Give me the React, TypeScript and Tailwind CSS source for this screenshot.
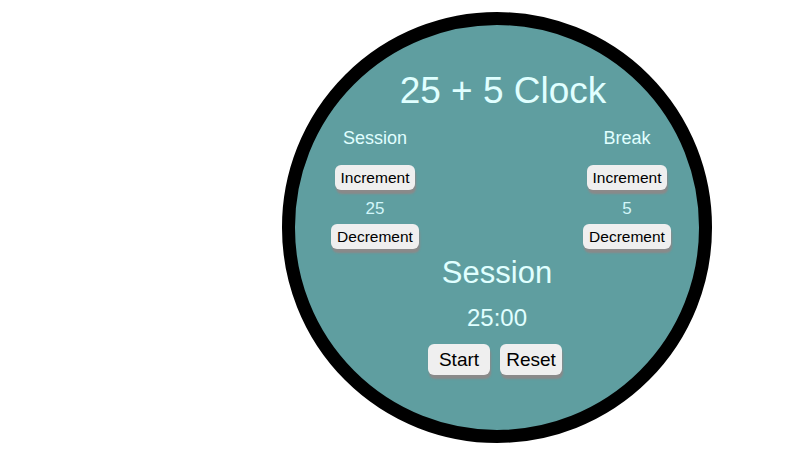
import React, { useState } from "react";

const btn =
  "rounded-[6px] bg-[#efefef] text-black shadow-[1px_4px_2px_#8a8a8a] leading-none";

export default function App() {
  const [session, setSession] = useState(25);
  const [brk, setBrk] = useState(5);

  return (
    <div className="h-[450px] w-[800px] bg-white font-['Liberation_Sans',Arial,sans-serif]">
      <div className="pl-[282px] pt-[12px]">
        <div className="flex h-[431px] w-[430px] flex-col items-center rounded-full border-[13px] border-black bg-[#5f9ea0] text-[#e0ffff]">
          <h1 className="mt-[44px] ml-[12px] text-[37px] leading-[43px]">25 + 5 Clock</h1>

          <div className="mt-[16px] ml-[36px] flex w-[340px] justify-between self-start">
            <div className="flex w-[88px] flex-col items-center">
              <p className="text-[18px] leading-[21px]">Session</p>
              <button
                onClick={() => setSession((v) => Math.min(60, v + 1))}
                className={`${btn} mt-[16px] h-[25px] px-[6px] text-[15.5px]`}
              >
                Increment
              </button>
              <p className="mt-[9px] text-[17px] leading-[20px] text-[#d2f6fa]">{session}</p>
              <button
                onClick={() => setSession((v) => Math.max(1, v - 1))}
                className={`${btn} mt-[5px] h-[25px] px-[6px] text-[15.5px]`}
              >
                Decrement
              </button>
            </div>
            <div className="flex w-[88px] flex-col items-center">
              <p className="text-[18px] leading-[21px]">Break</p>
              <button
                onClick={() => setBrk((v) => Math.min(60, v + 1))}
                className={`${btn} mt-[16px] h-[25px] px-[6px] text-[15.5px]`}
              >
                Increment
              </button>
              <p className="mt-[9px] text-[17px] leading-[20px] text-[#d2f6fa]">{brk}</p>
              <button
                onClick={() => setBrk((v) => Math.max(1, v - 1))}
                className={`${btn} mt-[5px] h-[25px] px-[6px] text-[15.5px]`}
              >
                Decrement
              </button>
            </div>
          </div>

          <p className="mt-[6px] text-[31px] leading-[36px]">Session</p>
          <p className="mt-[13px] text-[24px] leading-[28px]">
            {String(session).padStart(2, "0")}:00
          </p>
          <div className="mt-[12px] mr-[4px] flex gap-[10px]">
            <button className={`${btn} h-[31px] w-[62px] text-[19px]`}>Start</button>
            <button className={`${btn} h-[31px] w-[62px] text-[19px]`}>Reset</button>
          </div>
        </div>
      </div>
    </div>
  );
}
